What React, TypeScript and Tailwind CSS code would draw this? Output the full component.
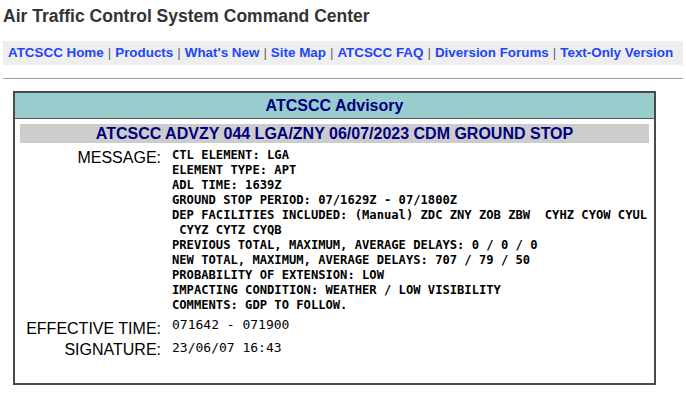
import React from "react";

const links = [
  "ATCSCC Home",
  "Products",
  "What's New",
  "Site Map",
  "ATCSCC FAQ",
  "Diversion Forums",
  "Text-Only Version",
];

const message = [
  "CTL ELEMENT: LGA",
  "ELEMENT TYPE: APT",
  "ADL TIME: 1639Z",
  "GROUND STOP PERIOD: 07/1629Z - 07/1800Z",
  "DEP FACILITIES INCLUDED: (Manual) ZDC ZNY ZOB ZBW  CYHZ CYOW CYUL",
  " CYYZ CYTZ CYQB",
  "PREVIOUS TOTAL, MAXIMUM, AVERAGE DELAYS: 0 / 0 / 0",
  "NEW TOTAL, MAXIMUM, AVERAGE DELAYS: 707 / 79 / 50",
  "PROBABILITY OF EXTENSION: LOW",
  "IMPACTING CONDITION: WEATHER / LOW VISIBILITY",
  "COMMENTS: GDP TO FOLLOW.",
];

export default function App() {
  return (
    <div className="w-[686px] h-[407px] bg-white px-[3px] font-['Liberation_Sans',Arial,sans-serif] overflow-hidden">
      <h1 className="pt-[7px] text-[17.5px] leading-[18px] font-bold text-[#333333]">
        Air Traffic Control System Command Center
      </h1>
      <div className="mt-[16px] h-[24px] bg-[#eeeeee] pl-[5px] flex items-center text-[13.4px] font-bold whitespace-nowrap">
        {links.map((l, i) => (
          <React.Fragment key={l}>
            {i > 0 && <span className="text-[#666666] font-normal px-[4px]">|</span>}
            <a href="#" className="text-[#2244ff]">
              {l}
            </a>
          </React.Fragment>
        ))}
      </div>
      <hr className="mt-[13px] border-0 border-t border-[#a0a0a0]" />
      <div className="mt-[12px] ml-[10px] w-[643px] h-[294px] border-2 border-[#4a4a4a]">
        <div className="h-[26px] bg-[#99cccc] border-b border-[#555555] flex items-center justify-center text-[16px] font-bold text-[#000080]">
          ATCSCC Advisory
        </div>
        <div className="px-[5px] pt-[5px]">
          <div className="h-[19px] bg-[#cccccc] flex items-center justify-center text-[16px] font-bold text-[#000080] whitespace-nowrap">
            ATCSCC ADVZY 044 LGA/ZNY 06/07/2023 CDM GROUND STOP
          </div>
          <div className="flex items-start mt-[4px]">
            <div className="w-[141px] text-right text-[16px] leading-[18px] pt-[2px] text-black">MESSAGE:</div>
            <div className="ml-[11px] pt-[1px] font-['DejaVu_Sans_Mono',monospace] text-[12.15px] leading-[15px] font-bold text-black whitespace-pre">
              {message.join("\n")}
            </div>
          </div>
          <div className="flex items-start mt-[5px]">
            <div className="w-[141px] text-right text-[16px] leading-[18px] pt-[2px] text-black">EFFECTIVE TIME:</div>
            <div className="ml-[11px] font-['DejaVu_Sans_Mono',monospace] text-[13px] leading-[14px] text-black whitespace-pre">
              071642 - 071900
            </div>
          </div>
          <div className="flex items-start mt-[1px]">
            <div className="w-[141px] text-right text-[16px] leading-[18px] pt-[2px] text-black">SIGNATURE:</div>
            <div className="ml-[11px] font-['DejaVu_Sans_Mono',monospace] text-[13px] leading-[18px] text-black whitespace-pre">
              23/06/07 16:43
            </div>
          </div>
        </div>
      </div>
    </div>
  );
}
